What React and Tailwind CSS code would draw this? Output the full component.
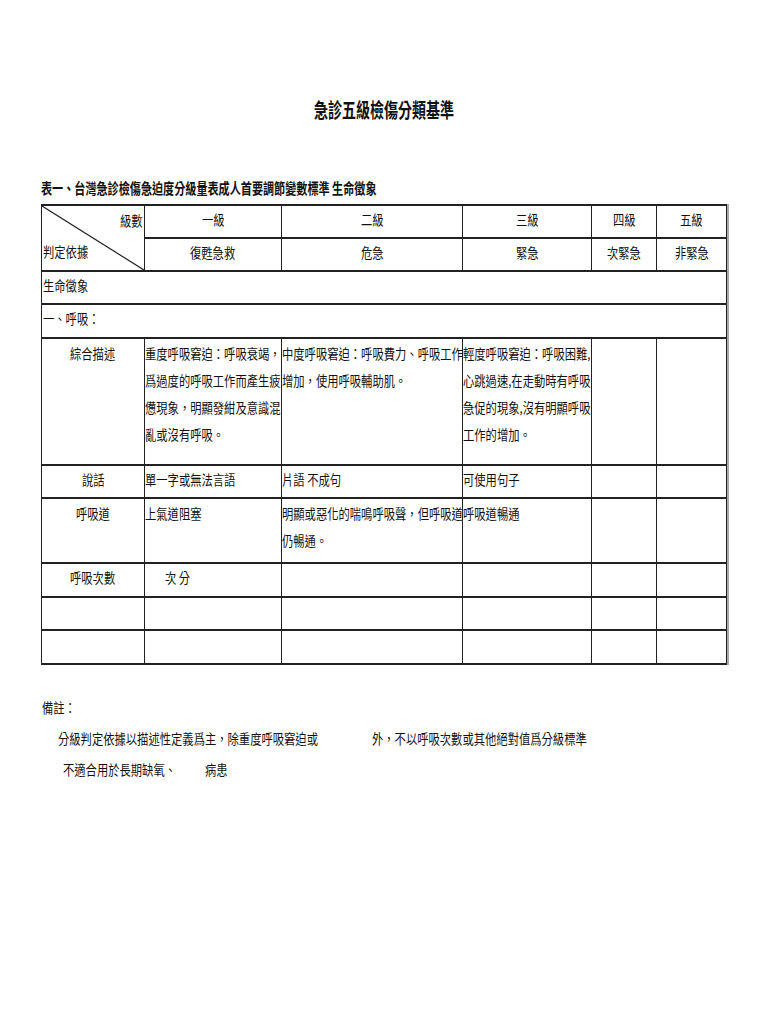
import React from 'react';

const font = { fontFamily: '"Noto Sans CJK TC", "Noto Sans CJK SC", sans-serif' };

// 縮窄字形，模擬原稿的細長字體
function T({ children, center, className = '' }) {
  return (
    <span
      className={`inline-block whitespace-nowrap scale-x-[0.85] ${center ? 'origin-center' : 'origin-left'} ${className}`}
    >
      {children}
    </span>
  );
}

function Lines({ lines }) {
  return (
    <div className="leading-[27px] pt-[1px]">
      {lines.map((l, i) => (
        <div key={i} className="h-[27px]">
          <T>{l}</T>
        </div>
      ))}
    </div>
  );
}

const td = 'border-x border-y-2 border-[#222] p-0 align-top overflow-hidden';

export default function App() {
  return (
    <div className="w-[768px] min-h-[1024px] bg-white text-[#111]" style={font}>
      <div className="pt-[99px] text-center leading-[22px]">
        <span className="inline-block scale-x-[0.7] text-[20px] font-bold">急診五級檢傷分類基準</span>
      </div>

      <div className="mt-[55px] ml-[41px] leading-[20px]">
        <span className="inline-block origin-left scale-x-[0.74] text-[15px] font-bold whitespace-nowrap">
          表一、台灣急診檢傷急迫度分級量表成人首要調節變數標準 生命徵象
        </span>
      </div>

      <table className="mt-[6px] ml-[41px] w-[685px] table-fixed border-collapse text-[13.3px] leading-[27px] shadow-[2px_0_0_#aaa]">
        <colgroup>
          <col className="w-[103px]" />
          <col className="w-[137px]" />
          <col className="w-[181px]" />
          <col className="w-[129px]" />
          <col className="w-[65px]" />
          <col className="w-[70px]" />
        </colgroup>
        <tbody>
          <tr className="h-[33px]">
            <td rowSpan={2} className={`${td} relative`}>
              <svg className="absolute inset-0 w-full h-full" viewBox="0 0 100 100" preserveAspectRatio="none">
                <line x1="0" y1="0" x2="100" y2="100" stroke="#222" strokeWidth="1.2" vectorEffect="non-scaling-stroke" />
              </svg>
              <div className="flex flex-col h-full justify-between">
                <div className="text-right pr-[1px] leading-[30px]">
                  <T className="origin-right">級數</T>
                </div>
                <div className="pl-[1px] leading-[32px]">
                  <T>判定依據</T>
                </div>
              </div>
            </td>
            <td className={`${td} text-center align-middle`}><T center>一級</T></td>
            <td className={`${td} text-center align-middle`}><T center>二級</T></td>
            <td className={`${td} text-center align-middle`}><T center>三級</T></td>
            <td className={`${td} text-center align-middle`}><T center>四級</T></td>
            <td className={`${td} text-center align-middle`}><T center>五級</T></td>
          </tr>
          <tr className="h-[33px]">
            <td className={`${td} text-center align-middle`}><T center>復甦急救</T></td>
            <td className={`${td} text-center align-middle`}><T center>危急</T></td>
            <td className={`${td} text-center align-middle`}><T center>緊急</T></td>
            <td className={`${td} text-center align-middle`}><T center>次緊急</T></td>
            <td className={`${td} text-center align-middle`}><T center>非緊急</T></td>
          </tr>
          <tr className="h-[33px]">
            <td colSpan={6} className={`${td} align-middle pl-[1px]`}><T>生命徵象</T></td>
          </tr>
          <tr className="h-[34px]">
            <td colSpan={6} className={`${td} align-middle pl-[1px]`}><T>一、呼吸：</T></td>
          </tr>
          <tr className="h-[127px]">
            <td className={`${td} text-center`}>
              <div className="pt-[1px]"><T center>綜合描述</T></div>
            </td>
            <td className={td}>
              <Lines lines={['重度呼吸窘迫：呼吸衰竭，', '爲過度的呼吸工作而產生疲', '憊現象，明顯發紺及意識混', '亂或沒有呼吸。']} />
            </td>
            <td className={td}>
              <Lines lines={['中度呼吸窘迫：呼吸費力、呼吸工作', '增加，使用呼吸輔助肌。']} />
            </td>
            <td className={td}>
              <Lines lines={['輕度呼吸窘迫：呼吸困難,', '心跳過速,在走動時有呼吸', '急促的現象,沒有明顯呼吸', '工作的增加。']} />
            </td>
            <td className={td}></td>
            <td className={td}></td>
          </tr>
          <tr className="h-[33px]">
            <td className={`${td} text-center align-middle`}><T center>說話</T></td>
            <td className={`${td} align-middle`}><T>單一字或無法言語</T></td>
            <td className={`${td} align-middle`}><T>片語 不成句</T></td>
            <td className={`${td} align-middle`}><T>可使用句子</T></td>
            <td className={td}></td>
            <td className={td}></td>
          </tr>
          <tr className="h-[65px]">
            <td className={`${td} text-center`}>
              <div className="pt-[1px]"><T center>呼吸道</T></div>
            </td>
            <td className={td}><Lines lines={['上氣道阻塞']} /></td>
            <td className={td}><Lines lines={['明顯或惡化的喘鳴呼吸聲，但呼吸道', '仍暢通。']} /></td>
            <td className={td}><Lines lines={['呼吸道暢通']} /></td>
            <td className={td}></td>
            <td className={td}></td>
          </tr>
          <tr className="h-[34px]">
            <td className={`${td} text-center align-middle`}><T center>呼吸次數</T></td>
            <td className={`${td} align-middle pl-[20px]`}><T>次 分</T></td>
            <td className={td}></td>
            <td className={td}></td>
            <td className={td}></td>
            <td className={td}></td>
          </tr>
          <tr className="h-[33px]">
            <td className={td}></td>
            <td className={td}></td>
            <td className={td}></td>
            <td className={td}></td>
            <td className={td}></td>
            <td className={td}></td>
          </tr>
          <tr className="h-[34px]">
            <td className={td}></td>
            <td className={td}></td>
            <td className={td}></td>
            <td className={td}></td>
            <td className={td}></td>
            <td className={td}></td>
          </tr>
        </tbody>
      </table>

      <div className="mt-[27px] text-[13.3px] leading-[31px]">
        <div className="ml-[42px]"><T>備註：</T></div>
        <div className="ml-[58px] whitespace-nowrap">
          <T>分級判定依據以描述性定義爲主，除重度呼吸窘迫或</T>
          <span className="inline-block ml-[8px]"><T>外，不以呼吸次數或其他絕對值爲分級標準</T></span>
        </div>
        <div className="ml-[63px] whitespace-nowrap">
          <T>不適合用於長期缺氧、</T>
          <span className="inline-block ml-[9px]"><T>病患</T></span>
        </div>
      </div>
    </div>
  );
}
